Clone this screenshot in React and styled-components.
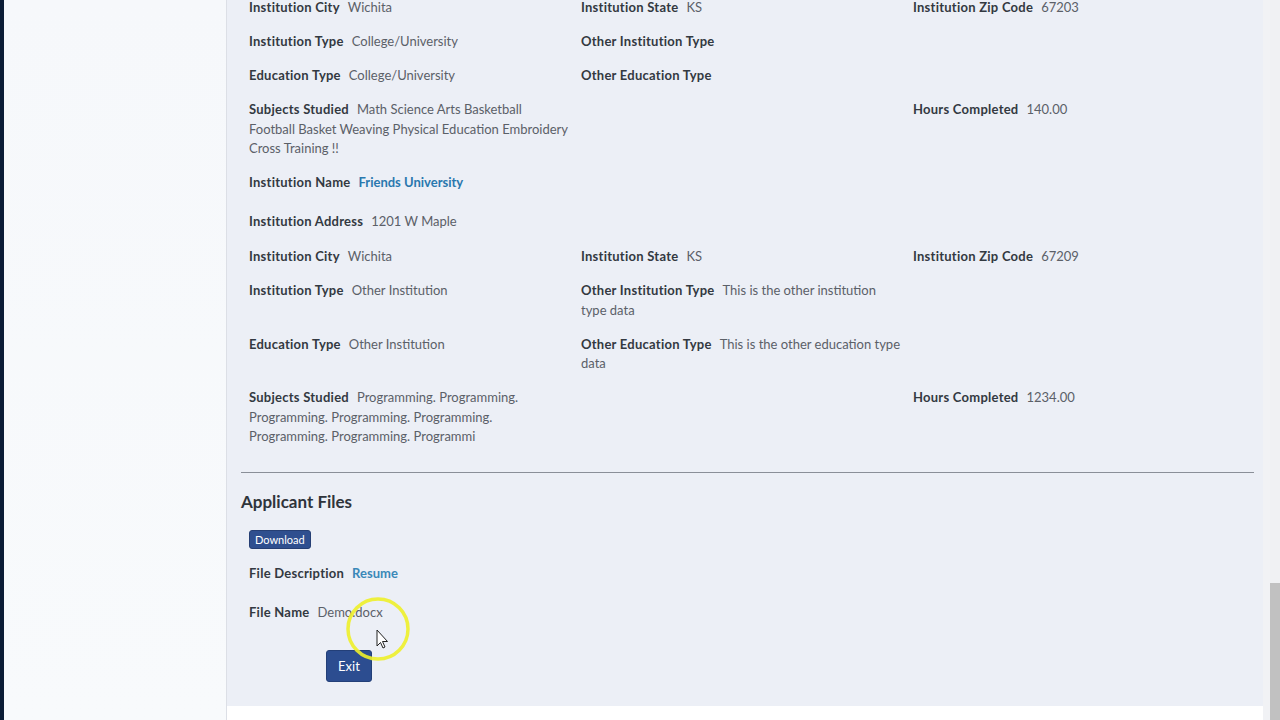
import React from 'react'
import styled, { createGlobalStyle } from 'styled-components'

const GlobalStyle = createGlobalStyle`
  html, body {
    margin: 0;
    padding: 0;
    overflow: hidden;
    background: #ffffff;
    font-family: "Source Sans Pro", Lato, "Liberation Sans", sans-serif;
  }
`

const Page = styled.div`
  display: flex;
  height: 100vh;
  position: relative;
`

const Sidebar = styled.aside`
  width: 222px;
  flex: none;
  border-left: 4px solid #0b1c36;
  background: linear-gradient(180deg, #f6f8fb 0%, #f8fafc 100%);
`

const Main = styled.main`
  flex: 1;
  display: flex;
  flex-direction: column;
  background: #ffffff;
  border-left: 1px solid #dcdfe6;
  min-width: 0;
`

const Panel = styled.section`
  background: #eceff6;
  padding: 0 9px 24px 14px;
`

const Details = styled.div`
  display: grid;
  grid-template-columns: repeat(3, 332px);
  padding: 0 8px;
  margin-top: -2px;
`

const Field = styled.div`
  grid-column: ${p => p.col || 'auto'} / span ${p => p.span || 1};
  margin-bottom: ${p => p.gap || 14.5}px;
  font-size: 13px;
  line-height: 19.5px;
  color: #5b6068;
  max-width: ${p => p.wrap || 316}px;
`

const Label = styled.span`
  font-weight: 700;
  color: #333941;
  margin-right: 8px;
  letter-spacing: 0.25px;
`

const Value = styled.span`
  color: ${p => (p.link ? '#2a78ae' : '#5b6068')};
  font-weight: ${p => (p.link ? 700 : 400)};
`

const Divider = styled.hr`
  border: none;
  border-top: 1px solid #8a8f98;
  margin: 11px 0 0;
`

const Heading = styled.h3`
  font-size: 17px;
  line-height: 24px;
  font-weight: 700;
  color: #2f343b;
  margin: 17px 0 16px;
`

const Files = styled.div`
  padding: 0 8px;
  display: flex;
  flex-direction: column;
  align-items: flex-start;
`

const SmallButton = styled.button`
  font-family: inherit;
  font-size: 11px;
  line-height: 17px;
  height: 19px;
  padding: 0 5px;
  color: #ffffff;
  background: #2f4f8f;
  border: 1px solid #263f74;
  border-radius: 3px;
  margin-bottom: 15px;
`

const FileField = styled.div`
  font-size: 13px;
  line-height: 19.5px;
  margin-bottom: ${p => p.gap}px;
`

const ExitButton = styled.button`
  font-family: inherit;
  font-size: 13px;
  width: 46px;
  height: 32px;
  margin-left: 77px;
  color: #ffffff;
  background: #2c4d90;
  border: 1px solid #233f78;
  border-radius: 3px;
`

const Gutter = styled.div`
  width: 7px;
  flex: none;
  background: #f1f2f5;
`

const ScrollTrack = styled.div`
  width: 10px;
  flex: none;
  background: #f0f1f3;
  display: flex;
  flex-direction: column;
  justify-content: flex-end;
`

const ScrollThumb = styled.div`
  height: 137px;
  background: #c1c1c1;
`

const Highlight = styled.svg`
  position: absolute;
  left: 344px;
  top: 595px;
  pointer-events: none;
`

const rows = [
  [
    { label: 'Institution City', value: 'Wichita' },
    { label: 'Institution State', value: 'KS' },
    { label: 'Institution Zip Code', value: '67203' },
  ],
  [
    { label: 'Institution Type', value: 'College/University' },
    { label: 'Other Institution Type', value: '' },
    null,
  ],
  [
    { label: 'Education Type', value: 'College/University' },
    { label: 'Other Education Type', value: '' },
    null,
  ],
  [
    { label: 'Subjects Studied', value: 'Math Science Arts Basketball Football Basket Weaving Physical Education Embroidery Cross Training !!', wrap: 321 },
    null,
    { label: 'Hours Completed', value: '140.00' },
  ],
]

const rows2 = [
  [
    { label: 'Institution City', value: 'Wichita' },
    { label: 'Institution State', value: 'KS' },
    { label: 'Institution Zip Code', value: '67209' },
  ],
  [
    { label: 'Institution Type', value: 'Other Institution' },
    { label: 'Other Institution Type', value: 'This is the other institution type data' },
    null,
  ],
  [
    { label: 'Education Type', value: 'Other Institution' },
    { label: 'Other Education Type', value: 'This is the other education type data', wrap: 322 },
    null,
  ],
  [
    { label: 'Subjects Studied', value: 'Programming. Programming. Programming. Programming. Programming. Programming. Programming. Programmi', wrap: 312 },
    null,
    { label: 'Hours Completed', value: '1234.00' },
  ],
]

function renderRows(list, prefix) {
  return list.map((row, r) =>
    row.map((f, c) =>
      f ? (
        <Field key={prefix + r + '-' + c} col={c + 1} wrap={f.wrap}>
          <Label>{f.label}</Label>
          <Value>{f.value}</Value>
        </Field>
      ) : null
    )
  )
}

function App() {
  return (
    <Page>
      <GlobalStyle />
      <Sidebar />
      <Main>
        <Panel>
          <Details>
            {renderRows(rows, 'a')}
            <Field col={1} span={3} gap={19.5} wrap={600}>
              <Label>Institution Name</Label>
              <Value link>Friends University</Value>
            </Field>
            <Field col={1} span={3} gap={15.5} wrap={600}>
              <Label>Institution Address</Label>
              <Value>1201 W Maple</Value>
            </Field>
            {renderRows(rows2, 'b')}
          </Details>
          <Divider />
          <Heading>Applicant Files</Heading>
          <Files>
            <SmallButton>Download</SmallButton>
            <FileField gap={19.5}>
              <Label>File Description</Label>
              <Value link style={{ color: '#3a88b8' }}>Resume</Value>
            </FileField>
            <FileField gap={27}>
              <Label>File Name</Label>
              <Value>Demo.docx</Value>
            </FileField>
            <ExitButton>Exit</ExitButton>
          </Files>
        </Panel>
      </Main>
      <Gutter />
      <ScrollTrack>
        <ScrollThumb />
      </ScrollTrack>
      <Highlight width="70" height="70" viewBox="0 0 70 70">
        <circle cx="34" cy="34" r="30" fill="none" stroke="#eef02a" strokeWidth="3.5" opacity="0.9" />
        <path d="M33 35 L33 51 L36.5 47.5 L39 53 L41 52 L38.5 46.5 L43.5 46.5 Z" fill="#ffffff" stroke="#222222" strokeWidth="1" strokeLinejoin="round" />
      </Highlight>
    </Page>
  )
}

export default App
